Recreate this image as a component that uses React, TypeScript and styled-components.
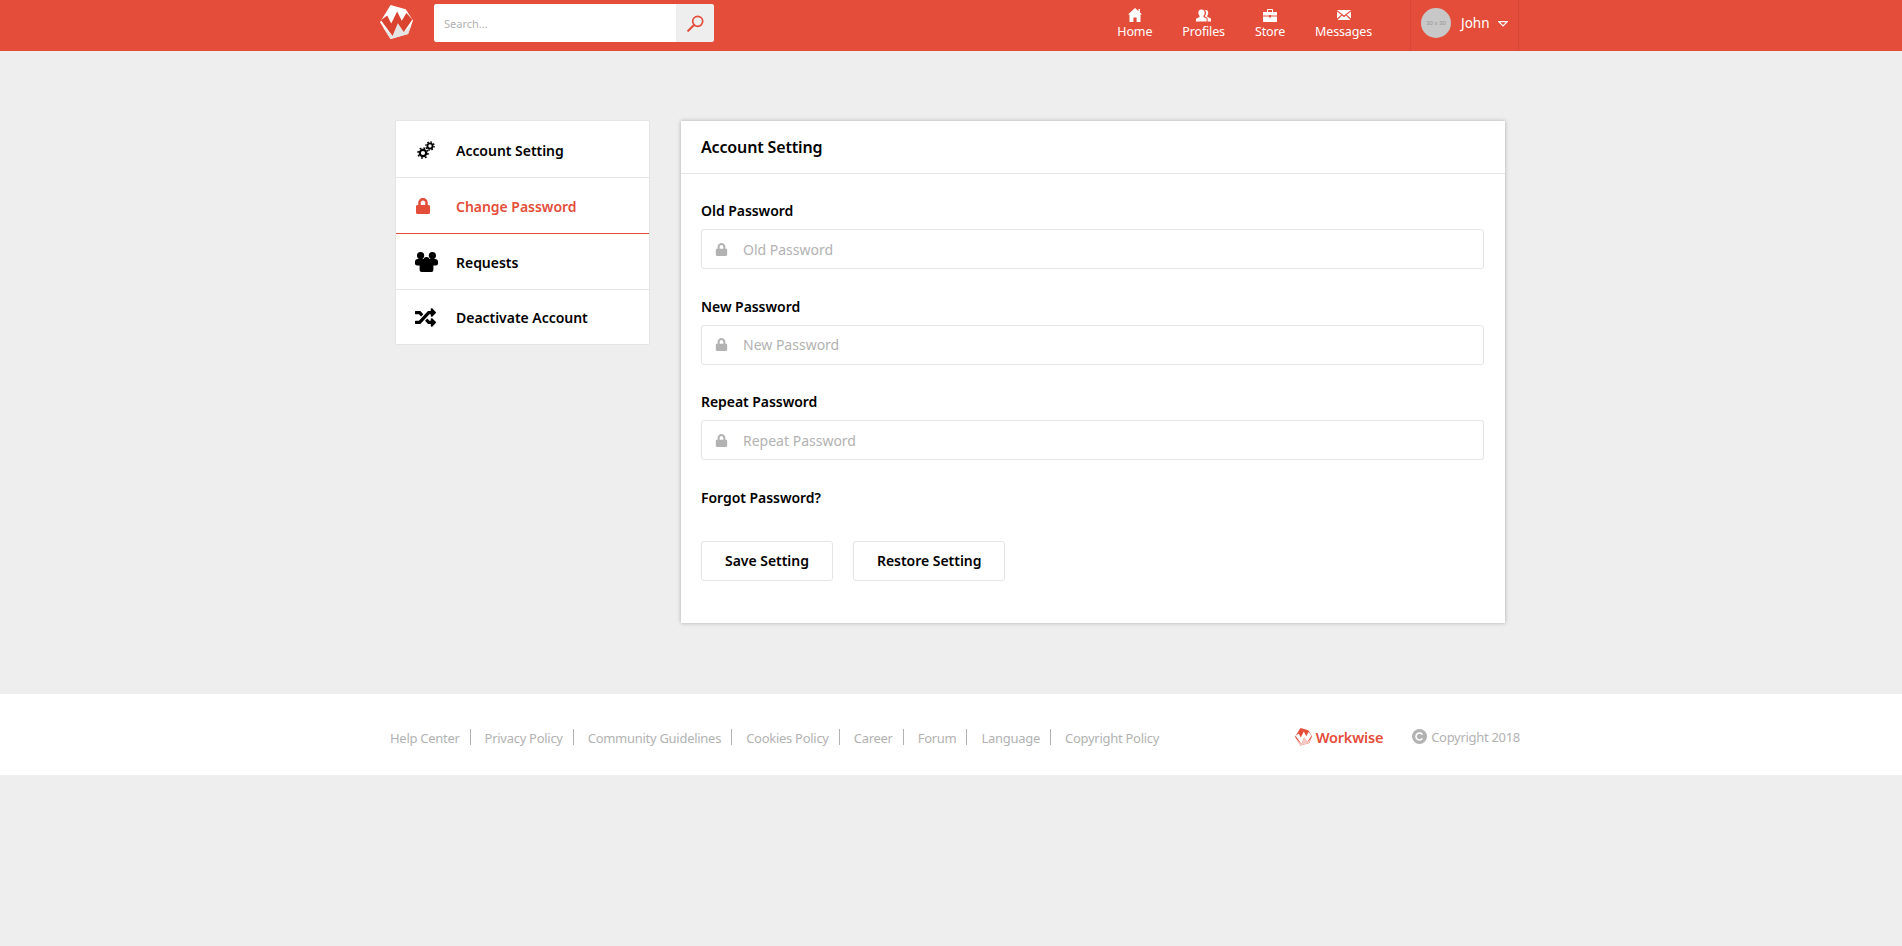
import { FC } from 'react';
import styled, { createGlobalStyle } from 'styled-components';
import { FaLock, FaRandom } from 'react-icons/fa';

const red = '#e44d3a';
const line = '#e5e5e5';
const muted = '#b2b2b2';

const GlobalStyle = createGlobalStyle`
  * {
    box-sizing: border-box;
  }
  html,
  body {
    margin: 0;
    min-height: 100%;
    background: #eeeeee;
    font-family: 'Noto Sans', 'Liberation Sans', sans-serif;
  }
  input,
  button {
    font-family: inherit;
  }
`;

const Page = styled.div`
  min-height: 946px;
  background: #eeeeee;
`;

const TopBar = styled.header`
  height: 51px;
  background: ${red};
`;

const TopInner = styled.div`
  width: 1170px;
  height: 100%;
  margin: 0 auto;
  padding: 0 17px 0 14px;
  display: flex;
  align-items: center;
`;

const LogoLink = styled.a`
  display: flex;
  margin-top: -7px;
`;

const SearchBox = styled.form`
  width: 280px;
  height: 38px;
  margin: -5px 0 0 21px;
  display: flex;
  background: #fff;
  border-radius: 3px;
  overflow: hidden;
`;

const SearchInput = styled.input`
  flex: 1;
  min-width: 0;
  border: 0;
  outline: 0;
  padding: 0 10px;
  font-size: 11px;
  color: #333;
  &::placeholder {
    color: ${muted};
  }
`;

const SearchButton = styled.button`
  width: 38px;
  border: 0;
  padding: 0;
  background: #eeeeee;
  display: flex;
  align-items: center;
  justify-content: center;
`;

const Nav = styled.nav`
  margin-left: auto;
  align-self: flex-start;
  display: flex;
  gap: 30px;
`;

const NavItem = styled.a`
  padding-top: 7px;
  display: flex;
  flex-direction: column;
  align-items: center;
  color: #fff;
  font-size: 12.5px;
  line-height: 17px;
  letter-spacing: -0.15px;
  white-space: nowrap;
`;

const NavIcon = styled.span`
  height: 16px;
  display: flex;
  align-items: center;
  justify-content: center;
`;

const UserBox = styled.div`
  width: 109px;
  height: 100%;
  margin-left: 38px;
  padding-left: 10px;
  display: flex;
  align-items: center;
  border-left: 1px solid #d74634;
  border-right: 1px solid #d74634;
  color: #fff;
  font-size: 13.5px;
`;

const Avatar = styled.div`
  width: 30px;
  height: 30px;
  margin-top: -6px;
  border-radius: 50%;
  background: #c8c8c8;
  color: #969696;
  font-family: 'Liberation Sans', sans-serif;
  font-size: 6px;
  display: flex;
  align-items: center;
  justify-content: center;
`;

const UserName = styled.span`
  margin: -6px 8px 0 10px;
`;

const Caret = styled.svg`
  margin-top: -3px;
`;

const Content = styled.main`
  width: 1110px;
  margin: 0 auto;
  padding-top: 70px;
  display: flex;
  align-items: flex-start;
  gap: 32px;
`;

const SideMenu = styled.ul`
  width: 253px;
  margin: 0;
  padding: 1px 0 0;
  list-style: none;
  background: #fff;
  box-shadow: 0 0 1px rgba(0, 0, 0, 0.24);
`;

const SideItem = styled.li<{ $active?: boolean }>`
  height: 56px;
  padding: 1px 0 0 19px;
  display: flex;
  align-items: center;
  border-bottom: 1px solid ${(p) => (p.$active ? red : line)};
  color: ${(p) => (p.$active ? red : '#000')};
  font-size: 14px;
  font-weight: 600;
  letter-spacing: -0.03px;
  &:last-child {
    height: 54px;
    border-bottom: 0;
  }
`;

const SideIcon = styled.span`
  width: 41px;
  display: flex;
  align-items: center;
  font-size: 16px;
`;

const Card = styled.section`
  width: 824px;
  background: #fff;
  box-shadow: 0 0 4px rgba(0, 0, 0, 0.28);
`;

const CardTitle = styled.h3`
  height: 53px;
  margin: 0;
  padding: 0 20px;
  display: flex;
  align-items: center;
  border-bottom: 1px solid ${line};
  font-size: 16px;
  font-weight: 600;
  letter-spacing: -0.15px;
  color: #000;
`;

const CardForm = styled.form`
  padding: 27px 21px 42px 20px;
`;

const Field = styled.div`
  margin-bottom: 27.6px;
`;

const FieldLabel = styled.label`
  display: block;
  height: 20px;
  margin-bottom: 8px;
  font-size: 14px;
  line-height: 20px;
  font-weight: 600;
  letter-spacing: -0.05px;
  color: #000;
`;

const InputWrap = styled.div`
  height: 40px;
  padding: 0 13px;
  display: flex;
  align-items: center;
  border: 1px solid ${line};
  border-radius: 3px;
  color: ${muted};
  font-size: 13px;
`;

const FieldInput = styled.input`
  flex: 1;
  border: 0;
  outline: 0;
  margin-left: 15px;
  padding: 0;
  font-size: 14px;
  color: #333;
  &::placeholder {
    color: ${muted};
  }
`;

const ForgotLink = styled.a`
  display: block;
  margin-top: 1px;
  font-size: 14px;
  line-height: 20px;
  font-weight: 600;
  letter-spacing: -0.05px;
  color: #000;
`;

const ButtonRow = styled.div`
  margin-top: 33px;
  display: flex;
  gap: 20px;
`;

const OutlineButton = styled.button`
  height: 40px;
  padding: 0 23px;
  border: 1px solid ${line};
  border-radius: 3px;
  background: #fff;
  font-size: 14px;
  font-weight: 600;
  letter-spacing: -0.03px;
  color: #000;
`;

const Footer = styled.footer`
  height: 81px;
  margin-top: 71px;
  background: #fff;
`;

const FooterInner = styled.div`
  width: 1170px;
  height: 100%;
  margin: 0 auto;
  padding: 5px 16px 0 24px;
  display: flex;
  align-items: center;
`;

const FooterLinks = styled.ul`
  margin: 0;
  padding: 0;
  list-style: none;
  display: flex;
  flex: 1;
`;

const FooterLink = styled.li`
  height: 16px;
  margin-right: 14px;
  padding-right: 10px;
  border-right: 1px solid ${muted};
  color: ${muted};
  font-size: 13px;
  line-height: 19px;
  letter-spacing: -0.28px;
  &:last-child {
    border-right: 0;
    margin-right: 0;
    padding-right: 0;
  }
`;

const Brand = styled.span`
  display: flex;
  align-items: center;
  gap: 4px;
  color: ${red};
  font-size: 14.5px;
  font-weight: 600;
  letter-spacing: -0.2px;
`;

const Copyright = styled.span`
  margin-left: 29px;
  display: flex;
  align-items: center;
  gap: 4px;
  color: ${muted};
  font-size: 13px;
  letter-spacing: -0.3px;
`;

const Logo: FC<{ size: number; tint?: boolean }> = ({ size, tint }) => (
  <svg width={size} height={(size * 103) / 100} viewBox="0 0 100 103">
    <path d="M32 0 L78 13 L100 47 L85 88 L32 103 L0 52 Z" fill={tint ? red : '#fff'} />
    <path d="M8 66 L32 103 L85 88 L95 62 L72 82 L54 55 L38 94 Z" fill={tint ? '#f3c9c3' : '#e4e4e4'} />
    <path
      d="M3 46 L22 32 L34 56 L52 20 L66 48 L80 24 L98 44 L72 82 L54 55 L38 94 Z"
      fill={tint ? '#fff' : '#d9432f'}
    />
  </svg>
);

const SearchIcon = () => (
  <svg width="17" height="17" viewBox="0 0 17 17" fill="none" stroke={red} strokeWidth="1.7">
    <circle cx="10.7" cy="6.3" r="5" />
    <path d="M7 10 L1.2 15.8" strokeWidth="2.1" strokeLinecap="round" />
  </svg>
);

const HomeIcon = () => (
  <svg width="14" height="14" viewBox="0 0 14 14" fill="#fff">
    <path d="M7 0 L10.5 3.2 V1 H12 V4.6 L14 6.5 H12.5 V14 H8.6 V9.5 H5.4 V14 H1.5 V6.5 H0 Z" />
  </svg>
);

const ProfilesIcon = () => (
  <svg width="15" height="13" viewBox="0 0 15 13" fill="#fff">
    <path d="M5.5 0.5 C8 0.5 9 2.5 8.6 4.6 C8.4 5.8 7.8 6.6 7.4 7 L7.4 8 L10.6 9.6 L10.6 12.5 L0 12.5 L0 9.8 L3.6 8 L3.6 7 C3 6.4 2.6 5.6 2.4 4.6 C2 2.5 3 0.5 5.5 0.5 Z" />
    <path d="M9.6 1 C11.7 1 12.6 2.7 12.2 4.6 C12 5.6 11.6 6.3 11.2 6.7 L11.2 7.8 L15 9.6 L15 12.5 L11.6 12.5 L11.6 9 L9 7.6 L9 6.9 C9.6 6.2 10 5.2 10 4 C10 2.9 9.7 1.9 9 1.1 Z" />
  </svg>
);

const StoreIcon = () => (
  <svg width="14" height="13" viewBox="0 0 14 13" fill="#fff">
    <path
      fillRule="evenodd"
      d="M5 0 H9 Q10 0 10 1 V3 H14 V6.6 H8 V6 H6 V6.6 H0 V3 H4 V1 Q4 0 5 0 Z M5 1 V3 H9 V1 Z"
    />
    <path d="M0 7.6 H6 V8.4 H8 V7.6 H14 V13 H0 Z" />
  </svg>
);

const MailIcon = () => (
  <svg width="14" height="10" viewBox="0 0 14 10" fill="#fff">
    <path d="M0 0 H14 L7 5.6 Z" />
    <path d="M0 1.4 L4.2 4.8 L0 8.6 Z" />
    <path d="M14 1.4 L9.8 4.8 L14 8.6 Z" />
    <path d="M0.6 10 L5 5.6 L7 7.2 L9 5.6 L13.4 10 Z" />
  </svg>
);

const GearsIcon = () => (
  <svg width="18" height="18" viewBox="0 0 18 18" fill="none" stroke="#000" style={{ marginLeft: 2 }}>
    <circle cx="6" cy="12" r="3.2" strokeWidth="2.2" />
    <circle cx="6" cy="12" r="5" strokeWidth="1.6" strokeDasharray="1.8 2.1" />
    <circle cx="13" cy="5" r="2.6" strokeWidth="1.8" />
    <circle cx="13" cy="5" r="4.1" strokeWidth="1.4" strokeDasharray="1.6 1.6" />
  </svg>
);

const GroupIcon = () => (
  <svg width="23" height="20" viewBox="0 0 23 20" fill="#000">
    <circle cx="5.6" cy="3.6" r="3.6" />
    <circle cx="17.4" cy="3.6" r="3.6" />
    <circle cx="11.5" cy="8" r="3" />
    <path d="M0 10 Q0 7 3 7 H20 Q23 7 23 10 V11.5 Q23 13.5 21 13.5 H2 Q0 13.5 0 11.5 Z" />
    <path d="M4.6 10 H18.4 V18 Q18.4 20 16.4 20 H6.6 Q4.6 20 4.6 18 Z" />
  </svg>
);

const CopyrightIcon = () => (
  <svg width="15" height="15" viewBox="0 0 15 15">
    <circle cx="7.5" cy="7.5" r="7.5" fill={muted} />
    <path d="M10.4 5.6 A3.5 3.5 0 1 0 10.4 9.4" fill="none" stroke="#fff" strokeWidth="1.6" />
  </svg>
);

const menu = [
  { label: 'Account Setting', icon: <GearsIcon /> },
  { label: 'Change Password', icon: <FaLock />, active: true },
  { label: 'Requests', icon: <GroupIcon /> },
  { label: 'Deactivate Account', icon: <FaRandom size={21} /> },
];

const navLinks = [
  { label: 'Home', icon: <HomeIcon /> },
  { label: 'Profiles', icon: <ProfilesIcon /> },
  { label: 'Store', icon: <StoreIcon /> },
  { label: 'Messages', icon: <MailIcon /> },
];

const fields = ['Old Password', 'New Password', 'Repeat Password'];

const footerLinks = [
  'Help Center',
  'Privacy Policy',
  'Community Guidelines',
  'Cookies Policy',
  'Career',
  'Forum',
  'Language',
  'Copyright Policy',
];

export default function App() {
  return (
    <Page>
      <GlobalStyle />
      <TopBar>
        <TopInner>
          <LogoLink>
            <Logo size={33} />
          </LogoLink>
          <SearchBox>
            <SearchInput placeholder="Search..." />
            <SearchButton type="button">
              <SearchIcon />
            </SearchButton>
          </SearchBox>
          <Nav>
            {navLinks.map((item) => (
              <NavItem key={item.label}>
                <NavIcon>{item.icon}</NavIcon>
                {item.label}
              </NavItem>
            ))}
          </Nav>
          <UserBox>
            <Avatar>30 x 30</Avatar>
            <UserName>John</UserName>
            <Caret width="10" height="6" viewBox="0 0 10 6" fill="none" stroke="#fff" strokeWidth="1.2">
              <path d="M0.8 0.6 H9.2 L5 5 Z" />
            </Caret>
          </UserBox>
        </TopInner>
      </TopBar>
      <Content>
        <SideMenu>
          {menu.map((item) => (
            <SideItem key={item.label} $active={item.active}>
              <SideIcon>{item.icon}</SideIcon>
              {item.label}
            </SideItem>
          ))}
        </SideMenu>
        <Card>
          <CardTitle>Account Setting</CardTitle>
          <CardForm>
            {fields.map((name) => (
              <Field key={name}>
                <FieldLabel>{name}</FieldLabel>
                <InputWrap>
                  <FaLock />
                  <FieldInput type="password" placeholder={name} />
                </InputWrap>
              </Field>
            ))}
            <ForgotLink>Forgot Password?</ForgotLink>
            <ButtonRow>
              <OutlineButton type="button">Save Setting</OutlineButton>
              <OutlineButton type="button">Restore Setting</OutlineButton>
            </ButtonRow>
          </CardForm>
        </Card>
      </Content>
      <Footer>
        <FooterInner>
          <FooterLinks>
            {footerLinks.map((link) => (
              <FooterLink key={link}>{link}</FooterLink>
            ))}
          </FooterLinks>
          <Brand>
            <Logo size={17} tint />
            Workwise
          </Brand>
          <Copyright>
            <CopyrightIcon />
            Copyright 2018
          </Copyright>
        </FooterInner>
      </Footer>
    </Page>
  );
}
